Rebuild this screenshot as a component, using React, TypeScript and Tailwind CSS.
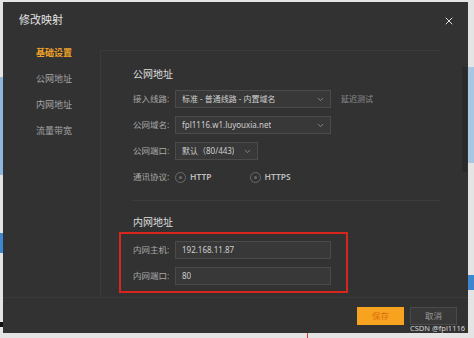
import { X, ChevronDown } from "lucide-react";

const FONT = { fontFamily: '"Noto Sans", "Noto Sans CJK SC", sans-serif' };

// ---- 左侧导航 ----
const NAV = ["基础设置", "公网地址", "内网地址", "流量带宽"];

function Chevron() {
  return <ChevronDown className="h-[9px] w-[9px] text-[#8a8a8a]" strokeWidth={2.5} />;
}

function Field({ label, children }: { label: string; children: React.ReactNode }) {
  return (
    <div className="flex h-[18px] items-center">
      <div className="w-[42px] shrink-0 text-[8.5px] text-[#a8a8a8]">{label}</div>
      {children}
    </div>
  );
}

function Box({ text, width, select }: { text: string; width: string; select?: boolean }) {
  return (
    <div
      className={
        "flex h-[18px] items-center justify-between border border-[#4b4b4b] bg-[#383838] pl-[6px] pr-[5px] text-[8px] text-[#cfcfcf] " +
        width
      }
    >
      <span className="truncate">{text}</span>
      {select && <Chevron />}
    </div>
  );
}

function Radio({ label }: { label: string }) {
  return (
    <div className="flex items-center gap-[4px]">
      <span className="flex h-[11px] w-[11px] items-center justify-center rounded-full border border-[#6a6a6a]">
        <span className="h-[3px] w-[3px] rounded-full bg-[#6a6a6a]" />
      </span>
      <span className="text-[8.5px] font-semibold text-[#bdbdbd]">{label}</span>
    </div>
  );
}

export default function App() {
  return (
    <div className="relative h-[338px] w-[474px] overflow-hidden bg-[#e4e4e4]" style={FONT}>
      {/* 背景桌面碎片 */}
      <div className="absolute left-0 top-[77px] h-[98px] w-[3px] bg-[#8fb6dc]" />
      <div className="absolute left-0 top-[233px] h-[20px] w-[3px] bg-[#3d86d0]" />
      <div className="absolute left-0 top-[322px] h-[5px] w-[3px] bg-[#111]" />
      <div className="absolute right-0 top-[67px] h-[96px] w-[6px] bg-[#a9c6e2]" />
      <div className="absolute right-0 top-[275px] h-[15px] w-[6px] bg-[#3d86d0]" />
      <div className="absolute left-[307px] top-[333px] h-[5px] w-[1px] bg-[#d33]" />

      {/* 弹窗 */}
      <div className="relative ml-[3px] mt-[2px] flex h-[331px] w-[465px] flex-col bg-[#323232]">
        {/* Header */}
        <div className="flex h-[37px] items-center justify-between pl-[16px] pr-[13px]">
          <div className="text-[11px] text-[#e2e2e2]">修改映射</div>
          <X className="h-[12px] w-[12px] text-[#e0e0e0]" strokeWidth={2} />
        </div>

        {/* Body */}
        <div className="flex h-[258px]">
          <div className="w-[97px] shrink-0 pt-[1px]">
            {NAV.map((n, i) => (
              <div
                key={n}
                className={
                  "flex h-[26px] items-center pl-[33px] text-[9px] " +
                  (i === 0 ? "font-semibold text-[#f0a22a]" : "text-[#a5a5a5]")
                }
              >
                {n}
              </div>
            ))}
          </div>

          <div className="mt-[11px] w-[340px] border-l border-t border-[#3b3b3b] pl-[32px]">
            <div className="mt-[16px] flex h-[14px] items-center text-[10px] text-[#dedede]">公网地址</div>

            <div className="mt-[9px] flex flex-col gap-[8px]">
              <Field label="接入线路:">
                <Box text="标准 - 普通线路 - 内置域名" width="w-[156px]" select />
                <span className="ml-[10px] text-[8px] text-[#8f8f8f]">延迟测试</span>
              </Field>
              <Field label="公网域名:">
                <Box text="fpl1116.w1.luyouxia.net" width="w-[156px]" select />
              </Field>
              <Field label="公网端口:">
                <Box text="默认（80/443)" width="w-[83px]" select />
              </Field>
              <Field label="通讯协议:">
                <div className="flex items-center gap-[38px]">
                  <Radio label="HTTP" />
                  <Radio label="HTTPS" />
                </div>
              </Field>
            </div>

            <div className="mt-[14px] border-t border-[#3d3d3d]" />

            <div className="mt-[14px] flex h-[14px] items-center text-[10px] text-[#dedede]">内网地址</div>

            <div className="-ml-[14px] mt-[3px] flex w-[229px] flex-col gap-[8px] border-2 border-[#d8261e] pb-[6px] pl-[12px] pt-[7px]">
              <Field label="内网主机:">
                <Box text="192.168.11.87" width="w-[156px]" />
              </Field>
              <Field label="内网端口:">
                <Box text="80" width="w-[156px]" />
              </Field>
            </div>
          </div>

          {/* 滚动条 */}
          <div className="ml-[22px] mt-[28px] h-[105px] w-[5px] bg-[#2a2a2a]" />
        </div>

        {/* Footer */}
        <div className="flex h-[36px] items-start justify-end gap-[6px] border-t border-[#3a3a3a] pr-[11px] pt-[9px]">
          <button className="flex h-[18px] w-[47px] items-center justify-center bg-[#f7a31f] text-[8.5px] text-[#d96f0c]">
            保存
          </button>
          <button className="flex h-[18px] w-[47px] items-center justify-center border border-[#4a4a4a] bg-[#383838] text-[8.5px] text-[#9a9a9a]">
            取消
          </button>
        </div>

        {/* 水印 */}
        <div className="absolute bottom-0 right-[3px] text-[7.5px] leading-[10px] text-[#d8d8d8]">CSDN @fpl1116</div>
      </div>
    </div>
  );
}
